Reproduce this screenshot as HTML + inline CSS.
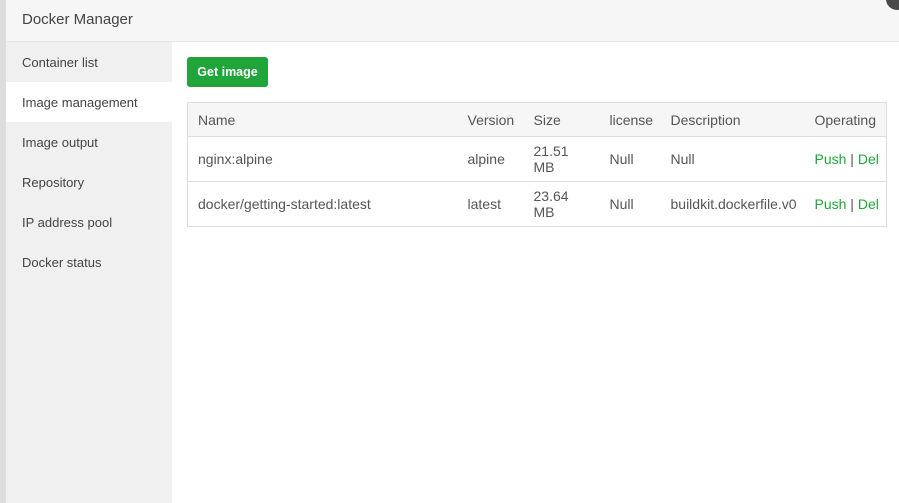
<!DOCTYPE html>
<html><head><meta charset="utf-8"><style>
*{margin:0;padding:0;box-sizing:border-box}
body{width:899px;height:503px;overflow:hidden;background:#fff;font-family:"Liberation Sans",sans-serif;color:#555;position:relative}
.strip{position:absolute;left:0;top:0;width:6px;height:503px;background:#ddd}
.hdr{position:absolute;left:6px;top:0;width:893px;height:42px;background:#f6f6f6;border-bottom:1px solid #e6e6e6}
.hdr span{position:absolute;left:16px;top:11px;font-size:15px;color:#444}
.close{position:absolute;left:886px;top:-12px;width:22px;height:22px;border-radius:50%;background:#4a4a4a}
.side{position:absolute;left:6px;top:42px;width:166px;height:461px;background:#f0f0f0}
.side div{height:40px;line-height:41px;padding-left:16px;font-size:13px;color:#444}
.side .act{background:#fff}
.btn{position:absolute;left:187px;top:57px;width:81px;height:30px;background:#20a53a;color:#fff;border-radius:3px;font-size:12.5px;font-weight:bold;line-height:30px;text-align:center}
table{position:absolute;left:187px;top:102px;width:700px;border-collapse:collapse;font-size:14px;border:1px solid #ddd}
td,th{border-bottom:1px solid #ddd;text-align:left;font-weight:normal;padding:0 0 0 10px;color:#555}
th{height:34px;background:#f6f6f6;color:#555}
td{height:45px;line-height:16px}
.g{color:#20a53a}
</style></head><body>
<div class="strip"></div>
<div class="hdr"><span>Docker Manager</span></div>
<div class="close"></div>
<div class="side">
<div>Container list</div><div class="act">Image management</div><div>Image output</div><div>Repository</div><div>IP address pool</div><div>Docker status</div>
</div>
<div class="btn">Get image</div>
<table>
<tr><th style="width:270px">Name</th><th style="width:66px">Version</th><th style="width:76px">Size</th><th style="width:61px">license</th><th style="width:144px">Description</th><th>Operating</th></tr>
<tr><td>nginx:alpine</td><td>alpine</td><td>21.51<br>MB</td><td>Null</td><td>Null</td><td><span class="g">Push</span> | <span class="g">Del</span></td></tr>
<tr><td>docker/getting-started:latest</td><td>latest</td><td>23.64<br>MB</td><td>Null</td><td>buildkit.dockerfile.v0</td><td><span class="g">Push</span> | <span class="g">Del</span></td></tr>
</table>
</body></html>
